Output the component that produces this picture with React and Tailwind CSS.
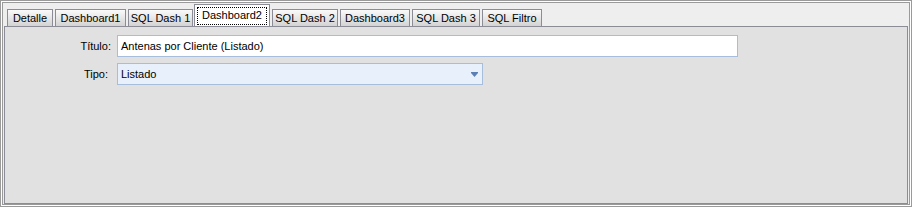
const tabs = [
  { label: "Detalle", w: "w-[46px]" },
  { label: "Dashboard1", w: "w-[71px]" },
  { label: "SQL Dash 1", w: "w-[65px]" },
  { label: "Dashboard2", w: "w-[76px]", selected: true },
  { label: "SQL Dash 2", w: "w-[66px]" },
  { label: "Dashboard3", w: "w-[70px]" },
  { label: "SQL Dash 3", w: "w-[68px]" },
  { label: "SQL Filtro", w: "w-[60px]" },
];

const Tab = ({ label, w, selected }) => {
  if (selected) {
    return (
      <div
        className={`${w} h-[22px] -ml-[1px] border border-b-0 border-[#8c8c96] bg-white p-[2px] pb-[1px]`}
      >
        <div className="h-full border border-dotted border-black flex items-center justify-center leading-none pb-[1px]">
          {label}
        </div>
      </div>
    );
  }
  return (
    <div
      className={`${w} h-[17px] border border-b-0 border-[#8c8c96] bg-gradient-to-b from-[#fafafa] to-[#d3d3d3] flex items-center justify-center leading-none`}
    >
      {label}
    </div>
  );
};

export default function App() {
  return (
    <div
      className="w-[912px] h-[207px] border border-[#9a9a9a] p-px bg-white text-[11px] text-black"
      style={{ fontFamily: '"Liberation Sans", Arial, sans-serif' }}
    >
      <div className="h-full border border-[#9a9a9a] bg-[#eeeeee] flex flex-col px-px">
        {/* tab strip */}
        <div className="h-[23px] flex items-end gap-[2px] pl-[3px]">
          {tabs.map((t) => (
            <Tab key={t.label} {...t} />
          ))}
        </div>

        {/* panel */}
        <div className="flex-1 border border-[#8c8c96] bg-[#e1e1e1] pt-[8px] flex flex-col gap-[6px]">
          <div className="flex items-center">
            <div className="w-[106px] text-right">Título:</div>
            <div className="ml-[6px] w-[621px] h-[22px] border border-[#a6bddc] bg-white flex items-center pl-[3px]">
              Antenas por Cliente (Listado)
            </div>
          </div>
          <div className="flex items-center">
            <div className="w-[106px] text-right pr-[3px]">Tipo:</div>
            <div className="ml-[6px] w-[366px] h-[22px] border border-[#a6bddc] bg-[#e8f0fb] flex items-center pl-[3px] pr-[3px]">
              <span className="flex-1">Listado</span>
              <svg width="7" height="5" viewBox="0 0 7 5" className="mr-[1px]">
                <rect x="0" y="0" width="7" height="1" fill="#5a7fb6" />
                <polygon points="0,1 7,1 3.5,5" fill="#5a7fb6" />
              </svg>
            </div>
          </div>
        </div>
      </div>
    </div>
  );
}
